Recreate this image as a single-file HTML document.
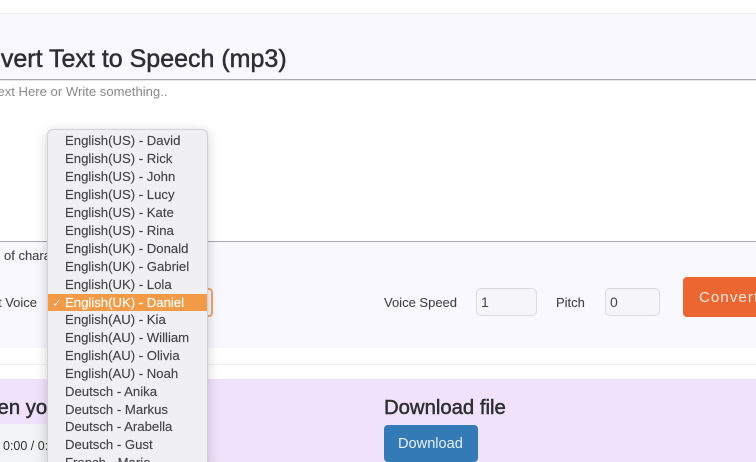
<!DOCTYPE html>
<html><head><meta charset="utf-8"><style>
html,body{margin:0;padding:0;width:756px;height:462px;overflow:hidden}
#w{position:relative;width:756px;height:462px;overflow:hidden;background:#fff;font-family:"Liberation Sans",sans-serif;color:#333}
.a{position:absolute}
.t{position:absolute;white-space:nowrap;filter:blur(.3px)}
.l{font-size:13px;line-height:17px;color:#444;-webkit-text-stroke:.1px #444}
.h{-webkit-text-stroke:.5px #2f2f33;color:#2f2f33}
.in{position:absolute;box-sizing:border-box;background:#f6f6f8;border:1px solid #dcdce0;border-radius:5px;font-size:14px;line-height:26px;padding-left:4px;color:#444;height:28px;top:288px}
#m{position:absolute;left:47px;top:129px;width:161px;height:340px;box-sizing:border-box;background:#f0eff1;border:1px solid #d2d1d5;border-radius:6px;box-shadow:0 3px 12px rgba(0,0,0,.2);overflow:hidden}
#m div{position:absolute;left:17px;font-size:13.15px;line-height:18px;height:18px;white-space:nowrap;color:#454547;-webkit-text-stroke:.15px #454547;filter:blur(.25px)}
#m #sel{left:0;top:164px;width:159px;height:17px;background:#f39a47;filter:none}
</style></head><body><div id="w">
<div class="a" style="left:0;top:13px;width:756px;height:1px;background:#f0f0f2"></div>
<div class="a" style="left:0;top:14px;width:756px;height:65px;background:#f8f8fe"></div>
<div class="a" style="left:0;top:79px;width:756px;height:1px;background:#aaa"></div>
<div class="a" style="left:0;top:80px;width:756px;height:1px;background:#e4e4e4"></div>
<div class="t h" style="left:-45px;top:45px;font-size:25px;line-height:28px">Convert Text to Speech (mp3)</div>
<div class="t" style="left:-46px;top:83px;font-size:13.1px;line-height:17px;color:#888">Paste Text Here or Write something..</div>
<div class="a" style="left:0;top:241px;width:756px;height:1px;background:#aaa"></div>
<div class="a" style="left:0;top:242px;width:756px;height:106px;background:#f8f8fe"></div>
<div class="a" style="left:0;top:364px;width:756px;height:1px;background:#f0f0f2"></div>
<div class="a" style="left:0;top:379px;width:756px;height:83px;background:#f0e2fb"></div>
<div class="t l" style="left:4px;top:247px">of characters</div>
<div class="t l" style="left:-2px;top:294px">t Voice</div>
<div class="a" style="left:150px;top:288px;width:63px;height:29px;box-sizing:border-box;border:2px solid #f0a868;border-radius:4px"></div>
<div class="t l" style="left:384px;top:294px">Voice Speed</div>
<div class="in" style="left:476px;width:61px">1</div>
<div class="t l" style="left:556px;top:294px">Pitch</div>
<div class="in" style="left:605px;width:55px">0</div>
<div class="a" style="left:683px;top:277px;width:90px;height:40px;background:#ec6632;border-radius:4px"></div>
<div class="t" style="left:699px;top:289px;font-size:15px;line-height:17px;letter-spacing:1.1px;color:#fbe9df">Convert</div>
<div class="t h" style="left:-34px;top:397px;font-size:20.3px;line-height:23px">Listen your file</div>
<div class="a" style="left:0;top:424px;width:48px;height:38px;background:#f1f3f4"></div>
<div class="t" style="left:3px;top:439px;font-size:12.5px;line-height:15px;color:#333;width:45px;overflow:hidden">0:00 / 0:00</div>
<div class="t h" style="left:384px;top:397px;font-size:20.3px;line-height:23px">Download file</div>
<div class="a" style="left:384px;top:425px;width:94px;height:37px;background:#337ab7;border-radius:4px"></div>
<div class="t" style="left:398px;top:435px;font-size:14.6px;line-height:18px;color:#e8f1f8">Download</div>
<div id="m">
<div id="sel"></div>
<div style="top:2px">English(US) - David</div>
<div style="top:20px">English(US) - Rick</div>
<div style="top:38px">English(US) - John</div>
<div style="top:56px">English(US) - Lucy</div>
<div style="top:74px">English(US) - Kate</div>
<div style="top:92px">English(US) - Rina</div>
<div style="top:110px">English(UK) - Donald</div>
<div style="top:128px">English(UK) - Gabriel</div>
<div style="top:146px">English(UK) - Lola</div>
<div style="top:164px;color:#fff;-webkit-text-stroke:.15px #fff">English(UK) - Daniel</div>
<div style="top:164px;left:4px;color:#fff;font-size:12px">✓</div>
<div style="top:181px">English(AU) - Kia</div>
<div style="top:199px">English(AU) - William</div>
<div style="top:217px">English(AU) - Olivia</div>
<div style="top:235px">English(AU) - Noah</div>
<div style="top:253px">Deutsch - Anika</div>
<div style="top:271px">Deutsch - Markus</div>
<div style="top:288px">Deutsch - Arabella</div>
<div style="top:306px">Deutsch - Gust</div>
<div style="top:324px">French - Marie</div>
</div>
</div></body></html>
